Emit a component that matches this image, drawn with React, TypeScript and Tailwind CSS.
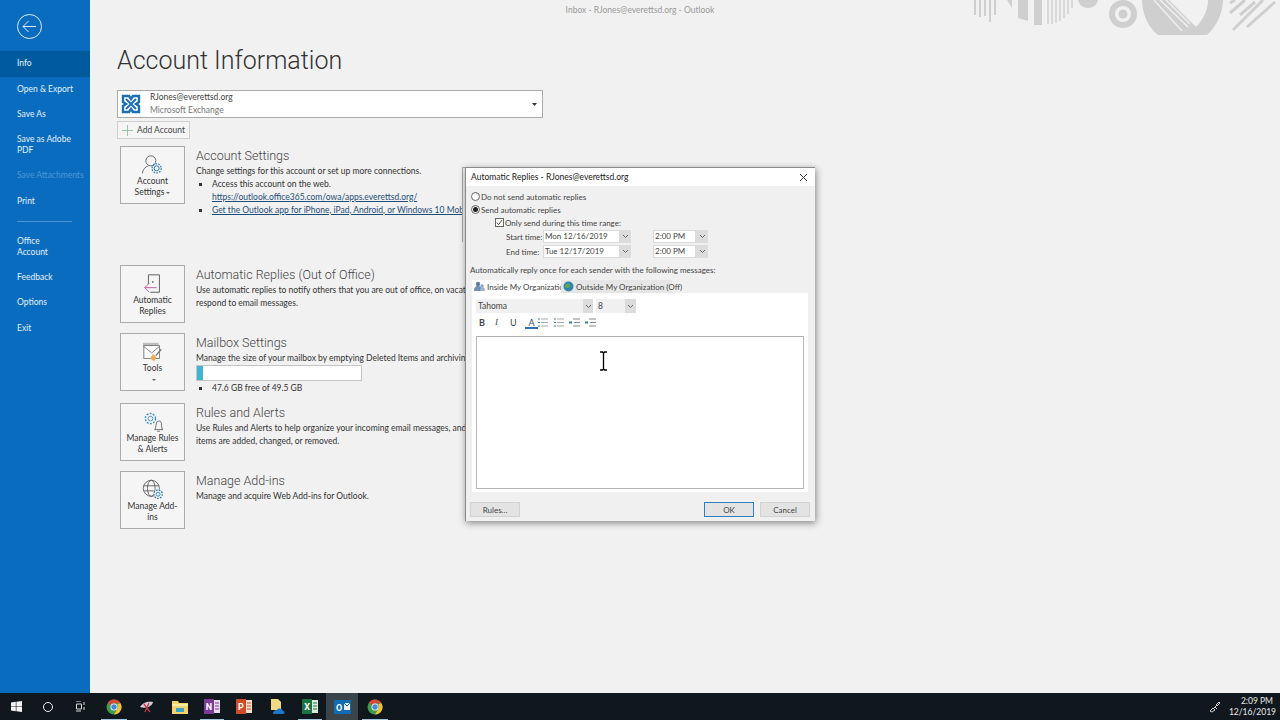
import { ReactNode } from "react";

const font = "font-['Lato','Roboto',sans-serif]";
const heading = "font-['Roboto',sans-serif]";

const NavItem = ({ label, active, dim }: { label: ReactNode; active?: boolean; dim?: boolean }) => (
  <div
    className={`flex items-center pl-[17px] h-[25.5px] text-[8.5px] leading-[11px] whitespace-nowrap ${
      active ? "bg-[#005a9e]" : ""
    } ${dim ? "text-[#4f97d3]" : "text-[#e4f0fa]"}`}
  >
    <span>{label}</span>
  </div>
);

const NavItemTall = ({ top, bottom }: { top: string; bottom: string }) => (
  <div className="flex items-center pl-[17px] h-[35.5px] text-[8.5px] leading-[11px] text-[#e4f0fa]">
    <span>
      {top}
      <br />
      {bottom}
    </span>
  </div>
);

const Caret = () => <span className="inline-block ml-[2px] mb-[1px] border-x-[2px] border-t-[2px] border-x-transparent border-t-[#666]" />;

const PersonGear = () => (
  <svg width="25" height="22" viewBox="0 0 30 26" fill="none">
    <circle cx="13" cy="8" r="6" stroke="#555" strokeWidth="1" />
    <path d="M3 23c0-5 4-8 7-9" stroke="#555" strokeWidth="1" />
    <circle cx="20" cy="17" r="3" stroke="#2b7cb8" strokeWidth="1.2" />
    <circle cx="20" cy="17" r="5.5" stroke="#2b7cb8" strokeWidth="1.5" strokeDasharray="2 1.4" />
  </svg>
);

const DoorArrow = () => (
  <svg width="22" height="22" viewBox="0 0 24 24" fill="none">
    <path d="M7 12V2h12v19H9" stroke="#555" strokeWidth="1" />
    <rect x="11" y="9" width="1.5" height="1.5" fill="#444" />
    <path d="M16 16H3m5-5-5 5 5 5" stroke="#c2569c" strokeWidth="1" />
  </svg>
);

const MailBroom = () => (
  <svg width="22" height="22" viewBox="0 0 24 24" fill="none">
    <rect x="1" y="2" width="17" height="4" fill="#bdbdbd" />
    <rect x="2" y="5" width="17" height="14" fill="#fff" stroke="#777" />
    <path d="m2 6 8.5 7L19 6" stroke="#777" />
    <path d="M21 9l-6 7" stroke="#777" strokeWidth="1.5" />
    <path d="m12 14 4 4-3 4-4-3z" fill="#eda95a" />
  </svg>
);

const GearBell = () => (
  <svg width="22" height="22" viewBox="0 0 26 26" fill="none">
    <circle cx="10" cy="9" r="2.8" stroke="#3a8cc4" strokeWidth="1" />
    <circle cx="10" cy="9" r="6" stroke="#3a8cc4" strokeWidth="1.6" strokeDasharray="2.2 1.6" />
    <path d="M15 22c2-2 1-8 3-9.500 1.500-1 3.500-1 4.500.5 1 2 0 7 2 9z" stroke="#555" strokeWidth="1" />
    <path d="M18 24h3" stroke="#555" />
  </svg>
);

const GlobeGear = () => (
  <svg width="22" height="22" viewBox="0 0 26 26" fill="none">
    <circle cx="11" cy="11" r="9.500" stroke="#555" />
    <ellipse cx="11" cy="11" rx="4.500" ry="9.500" stroke="#555" />
    <path d="M2 8h18M2 14h12" stroke="#555" />
    <circle cx="19" cy="18" r="5.500" fill="#f1f1f1" />
    <circle cx="19" cy="18" r="2.300" stroke="#2b7cb8" />
    <circle cx="19" cy="18" r="5" stroke="#2b7cb8" strokeWidth="1.500" strokeDasharray="2 1.400" />
  </svg>
);

const Card = ({ icon, children }: { icon: ReactNode; children: ReactNode }) => (
  <div className="w-[65px] h-[58px] shrink-0 bg-[#f5f5f5] border border-[#ababab] flex flex-col items-center pt-[7px]">
    <div className="h-[22px] flex items-center justify-center">{icon}</div>
    <div className="text-[8.5px] leading-[10.5px] text-[#333] text-center whitespace-nowrap">{children}</div>
  </div>
);

const Bullet = ({ children }: { children: ReactNode }) => (
  <div className="flex items-start text-[8.5px] leading-[13px] text-[#333] whitespace-nowrap">
    <span className="w-[3px] h-[3px] bg-[#333] ml-[3px] mr-[10px] mt-[5px] shrink-0" />
    <div>{children}</div>
  </div>
);

const Row = ({ children, title, card, h }: { children: ReactNode; title: string; card: ReactNode; h: string }) => (
  <div className={`flex ml-[3px] ${h}`}>
    {card}
    <div className="ml-[11px]">
      <div className={`${heading} text-[12.5px] leading-[18px] font-light text-[#444] mt-[1px] whitespace-nowrap`}>{title}</div>
      <div>{children}</div>
    </div>
  </div>
);

const Desc = ({ children }: { children: ReactNode }) => (
  <div className="text-[8.5px] leading-[12.5px] text-[#333] whitespace-nowrap">{children}</div>
);

const Chevron = () => (
  <svg width="7" height="5" viewBox="0 0 7 5" fill="none" className="shrink-0">
    <path d="m1 1 2.500 2.500L6 1" stroke="#666" />
  </svg>
);

const Combo = ({ value, w, arrow }: { value: string; w: string; arrow: string }) => (
  <div className={`flex h-[13px] ${w}`}>
    <div className="flex-1 bg-white border border-[#dadada] pl-[1px] text-[8px] leading-[11px] text-[#444] whitespace-nowrap">
      {value}
    </div>
    <div className={`${arrow} bg-[#dcdcdc] flex items-center justify-center`}>
      <Chevron />
    </div>
  </div>
);

const DlgBtn = ({ label, primary, w }: { label: string; primary?: boolean; w: string }) => (
  <div
    className={`${w} h-[15px] flex items-center justify-center text-[8px] text-[#444] bg-[#e3e3e3] border ${
      primary ? "border-[#2f7fc0]" : "border-[#d2d2d2]"
    }`}
  >
    {label}
  </div>
);

const Dialog = () => (
  <div className="absolute left-[465px] top-[167px] w-[350px] h-[354px] bg-[#f0f0f0] border-l border-t border-[#8a8a8a] shadow-[1px_2px_7px_rgba(0,0,0,0.45)] flex flex-col">
    <div className="h-[18px] bg-white flex items-center justify-between pl-[5px] pr-[7px] shrink-0">
      <span className="text-[8.5px] text-[#222]">Automatic Replies - RJones@everettsd.org</span>
      <svg width="9" height="9" viewBox="0 0 9 9" fill="none">
        <path d="m1 1 7 7M8 1 1 8" stroke="#333" />
      </svg>
    </div>
    <div className="pl-[4px] text-[8px] text-[#444] flex-1 flex flex-col">
      <div className="h-[13px] mt-[4px] ml-[1px] flex items-center whitespace-nowrap">
        <span className="w-[9px] h-[9px] rounded-full border border-[#666] bg-white mr-[1px]" />
        <span>Do not send automatic replies</span>
      </div>
      <div className="h-[13px] ml-[1px] flex items-center whitespace-nowrap">
        <span className="w-[9px] h-[9px] rounded-full border border-[#666] bg-white flex items-center justify-center mr-[1px]">
          <span className="w-[5px] h-[5px] rounded-full bg-[#222]" />
        </span>
        <span>Send automatic replies</span>
      </div>
      <div className="h-[13px] ml-[25px] flex items-center gap-[1px] whitespace-nowrap">
        <span className="w-[9px] h-[9px] border border-[#666] bg-white flex items-center justify-center">
          <svg width="7" height="7" viewBox="0 0 8 8" fill="none">
            <path d="m1 4 2 2.500L7 1" stroke="#333" />
          </svg>
        </span>
        <span>Only send during this time range:</span>
      </div>
      <div className="h-[15px] flex items-center">
        <span className="w-[37px] ml-[36px] whitespace-nowrap">Start time:</span>
        <Combo value="Mon 12/16/2019" w="w-[88px]" arrow="w-[11px]" />
        <span className="w-[22px]" />
        <Combo value="2:00 PM" w="w-[55px]" arrow="w-[12px]" />
      </div>
      <div className="h-[15px] flex items-center">
        <span className="w-[37px] ml-[36px] whitespace-nowrap">End time:</span>
        <Combo value="Tue 12/17/2019" w="w-[88px]" arrow="w-[11px]" />
        <span className="w-[22px]" />
        <Combo value="2:00 PM" w="w-[55px]" arrow="w-[12px]" />
      </div>
      <div className="h-[12px] mt-[5px] leading-[12px] whitespace-nowrap">
        Automatically reply once for each sender with the following messages:
      </div>
      <div className="h-[13px] mt-[4px] ml-[2px] flex shrink-0">
        <div className="w-[89px] bg-white flex items-center gap-[2px] pl-[2px] whitespace-nowrap">
          <svg width="11" height="11" viewBox="0 0 11 11" className="shrink-0">
            <circle cx="4" cy="3" r="2.200" fill="#5b7fa8" />
            <path d="M0 10c0-4 2-5 4-5s4 1 4 5z" fill="#6f8fb5" />
            <circle cx="8" cy="5" r="1.700" fill="#8aa4c2" />
            <path d="M6 10c0-3 1-4 2.500-4s2.500 1 2.500 4z" fill="#9db3cc" />
          </svg>
          <span>Inside My Organization</span>
        </div>
        <div className="w-[111px] bg-[#e6e6e6] flex items-center gap-[2px] pl-[2px] whitespace-nowrap">
          <svg width="11" height="11" viewBox="0 0 11 11" className="shrink-0">
            <circle cx="5.500" cy="5.500" r="5" fill="#2f84a8" />
            <path d="M2 4c2-2 4-2 5 0s-1 3-3 3-3-1-2-3z" fill="#59a65a" />
          </svg>
          <span>Outside My Organization (Off)</span>
        </div>
      </div>
      <div className="ml-[2px] w-[336px] h-[199px] bg-white shrink-0 pl-[4px] pt-[6px]">
        <div className="flex h-[14px] gap-[3px]">
          <div className="w-[117px] h-[14px] bg-[#f0f0f0] flex">
            <span className="flex-1 text-[8.5px] leading-[15px] pl-[2px] text-[#444]">Tahoma</span>
            <span className="w-[10px] bg-[#dcdcdc] flex items-center justify-center">
              <Chevron />
            </span>
          </div>
          <div className="w-[40px] h-[14px] bg-[#f0f0f0] flex">
            <span className="flex-1 text-[8.5px] leading-[15px] pl-[2px] text-[#444]">8</span>
            <span className="w-[11px] bg-[#dcdcdc] flex items-center justify-center">
              <Chevron />
            </span>
          </div>
        </div>
        <div className="flex items-center h-[13px] mt-[3px] pl-[3px] text-[#444]">
          <span className="w-[16px] text-[9px] font-bold leading-[13px]">B</span>
          <span className="w-[15px] text-[9px] italic font-['Liberation_Serif',serif] leading-[13px]">I</span>
          <span className="w-[15px] text-[9px] leading-[13px]">U</span>
          <span className="w-[13px] text-[9px] leading-[11px] text-[#2d4f7c] border-b-2 border-[#2f6fb5] h-[12px] text-center">A</span>
          <svg width="62" height="11" viewBox="0 0 62 11" fill="none">
            <path d="M0 2h2M0 5.500h2M0 9h2" stroke="#3c78b4" />
            <path d="M3 2h7M3 5.500h7M3 9h7" stroke="#aaa" />
            <path d="M16 2h2M16 5.500h2M16 9h2" stroke="#3c78b4" />
            <path d="M19 2h7M19 5.500h7M19 9h7" stroke="#aaa" />
            <path d="M31 5.500h3" stroke="#3c78b4" strokeWidth="2" />
            <path d="M35 2h7M36 5.500h6M35 9h7" stroke="#888" />
            <path d="M47 5.500h3" stroke="#3c78b4" strokeWidth="2" />
            <path d="M51 2h7M52 5.500h6M51 9h7" stroke="#888" />
          </svg>
        </div>
        <div className="w-[328px] h-[153px] mt-[7px] border border-[#b5b5b5] bg-white" />
      </div>
      <div className="flex mt-[10px]">
        <DlgBtn label="Rules..." w="w-[50px]" />
        <span className="w-[184px]" />
        <DlgBtn label="OK" primary w="w-[50px]" />
        <span className="w-[6px]" />
        <DlgBtn label="Cancel" w="w-[50px]" />
      </div>
    </div>
  </div>
);

// faint Office theme art in the title bar
const Deco = () => (
  <svg
    className="absolute left-[970px] top-0"
    width="310"
    height="38"
    viewBox="0 0 310 38"
    fill="none"
    stroke="#cfcfcf"
  >
    <path d="M5 0v15M10 0v17M15 0v16M20 0v22M25 0v15" strokeWidth="2" />
    <path d="M37 0h5v8z" fill="#cfcfcf" stroke="none" />
    <path d="M48 0h10v21l-10-3zM64 0h8v25h-8z" fill="#cfcfcf" stroke="none" />
    <path d="M78 0v24M82 0v24M86 0v23M90 0v21M94 0v18M98 0v14M102 0v8" strokeWidth="1.500" />
    <path d="M108 0h20c-1 5-5 8-10 8s-9-3-10-8z" fill="#cfcfcf" stroke="none" />
    <circle cx="153" cy="14" r="11" strokeWidth="6" />
    <circle cx="153" cy="14" r="4.500" fill="#cfcfcf" stroke="none" />
    <path
      d="M172 0c0 12 5 26 16 35h49c10-9 16-23 16-35h-15c0 10-5 20-12 27l-27-27z"
      fill="#cfcfcf"
      stroke="none"
    />
    <path d="M184 0l28 31M190 0l28 27M196 0l24 24" stroke="#efefef" strokeWidth="1.500" />
    <path d="M260 3l5-3M260 13l15-13M270 15l15-13M263 30 293 0M277 27l28-25" strokeWidth="3" />
  </svg>
);

const AppIcon = ({ bg, letter, fg }: { bg: string; letter: string; fg: string }) => (
  <svg width="16" height="15" viewBox="0 0 16 15">
    <rect x="5" y="1" width="11" height="13" fill={fg} />
    <path d="M11 4h4M11 7h4M11 10h4" stroke={bg} />
    <rect x="0" y="0" width="10" height="15" fill={bg} />
    <text x="5" y="11" fontSize="9" fontWeight="700" textAnchor="middle" fill="#fff" fontFamily="Roboto">
      {letter}
    </text>
  </svg>
);

const Chrome = () => (
  <svg width="16" height="16" viewBox="0 0 16 16">
    <circle cx="8" cy="8" r="7.500" fill="#3f9a4c" />
    <path d="M8 .5a7.500 7.500 0 0 1 6.500 3.750H8A3.750 3.750 0 0 0 4.500 6.500L2 3.500A7.500 7.500 0 0 1 8 .5z" fill="#d9483b" />
    <path d="M14.500 4.250A7.500 7.500 0 0 1 8 15.500L11.250 10A3.750 3.750 0 0 0 11 5z" fill="#f2c233" />
    <circle cx="8" cy="8" r="3.500" fill="#fff" />
    <circle cx="8" cy="8" r="2.700" fill="#4a86d8" />
  </svg>
);

const Slot = ({ children, w, on, run }: { children: ReactNode; w: string; on?: boolean; run?: boolean }) => (
  <div className={`${w} h-full flex items-center justify-center relative shrink-0 ${on ? "bg-[#39444b]" : ""}`}>
    {children}
    {run && <span className="absolute bottom-0 left-[4px] right-[4px] h-px bg-[#9fc4dc]" />}
  </div>
);

const Taskbar = () => (
  <div className="h-[27px] shrink-0 bg-[#10181d] flex items-center text-[#e8e8e8]">
    <Slot w="w-[32px]">
      <svg width="11" height="11" viewBox="0 0 11 11" fill="#f4f4f4">
        <path d="M0 1.500 4.800.8V5.200H0zM5.400.7 11 0v5.200H5.400zM0 5.800h4.800v4.400L0 9.500zM5.400 5.800H11V11l-5.600-.8z" />
      </svg>
    </Slot>
    <Slot w="w-[31px]">
      <span className="w-[10px] h-[10px] rounded-full border-[1.5px] border-[#eee]" />
    </Slot>
    <Slot w="w-[34px]">
      <svg width="12" height="11" viewBox="0 0 12 11" fill="none" stroke="#d8d8d8">
        <path d="M2 0h5M2 10h5M2.500 3h5v5h-5zM10 1v3M10 6v3" />
      </svg>
    </Slot>
    <Slot w="w-[34px]" run>
      <Chrome />
    </Slot>
    <Slot w="w-[32px]">
      <svg width="16" height="14" viewBox="0 0 16 14" fill="none">
        <path d="M1 7c3-5 8-6 13-5-1 4-6 7-13 5z" fill="#d5cdd6" />
        <path d="m5 4 6 8M10 3 6 12" stroke="#c23b4b" strokeWidth="1.300" />
      </svg>
    </Slot>
    <Slot w="w-[33px]">
      <svg width="16" height="14" viewBox="0 0 16 14">
        <path d="M0 1h6l1 2h9v11H0z" fill="#f5d36b" />
        <rect x="0" y="4" width="16" height="2" fill="#fbe9a8" />
        <rect x="4" y="8" width="8" height="4" fill="#39a7c9" />
      </svg>
    </Slot>
    <Slot w="w-[32px]" run>
      <AppIcon bg="#7a3a96" letter="N" fg="#e8dcee" />
    </Slot>
    <Slot w="w-[32px]">
      <AppIcon bg="#cf4a27" letter="P" fg="#f5ddd4" />
    </Slot>
    <Slot w="w-[34px]">
      <svg width="15" height="16" viewBox="0 0 15 16">
        <path d="M1 0h7l3 3v8H1z" fill="#f3d985" />
        <path d="M3 15c0-3 2-4 4-4 1-2 5-2 6 1 2 0 2 3 0 3z" fill="#1e78c8" />
      </svg>
    </Slot>
    <Slot w="w-[32px]" run>
      <AppIcon bg="#1c7243" letter="X" fg="#d8ebdf" />
    </Slot>
    <Slot w="w-[32px]" on>
      <svg width="17" height="14" viewBox="0 0 17 14">
        <rect x="0" y="0" width="17" height="14" fill="#0f6cb5" />
        <text x="5" y="11" fontSize="9" fontWeight="700" textAnchor="middle" fill="#fff" fontFamily="Roboto">
          O
        </text>
        <rect x="10" y="3" width="6" height="7" fill="#e8f1f8" />
        <path d="m10 3 3 3 3-3" stroke="#0f6cb5" fill="none" />
      </svg>
    </Slot>
    <Slot w="w-[34px]" run>
      <Chrome />
    </Slot>
    <div className="ml-auto flex items-center pr-[4px]">
      <svg width="12" height="12" viewBox="0 0 12 12" fill="none" stroke="#ccc" className="mr-[8px]">
        <path d="M1 10 4 7l2 2-3 2zM6 6l2 2M7 4l3-3 1 1-3 3zM5 7l2-2" />
      </svg>
      <div className="text-[8.5px] leading-[11px] text-right text-[#e8e8e8]">
        <div className="pr-[3px]">2:09 PM</div>
        <div>12/16/2019</div>
      </div>
    </div>
  </div>
);

export default function App() {
  return (
    <div className={`${font} relative w-[1280px] h-[720px] overflow-hidden flex flex-col bg-[#f1f1f1]`}>
      <div className="flex flex-1 min-h-0">
        {/* backstage nav */}
        <div className="w-[90px] shrink-0 bg-[#0a6cbe] flex flex-col">
          <div className="h-[51px] pl-[17px] pt-[14px]">
            <svg width="25" height="25" viewBox="0 0 25 25" fill="none" stroke="#dcecf8">
              <circle cx="12.500" cy="12.500" r="12" />
              <path d="M6 12.500h13M11.500 7l-5.500 5.500 5.500 5.500" />
            </svg>
          </div>
          <NavItem label="Info" active />
          <NavItem label="Open & Export" />
          <NavItem label="Save As" />
          <NavItemTall top="Save as Adobe" bottom="PDF" />
          <NavItem label="Save Attachments" dim />
          <NavItem label="Print" />
          <div className="ml-[17px] w-[55px] h-px bg-[#4a94d2] mt-[7px] mb-[7px]" />
          <NavItemTall top="Office" bottom="Account" />
          <NavItem label="Feedback" />
          <NavItem label="Options" />
          <NavItem label="Exit" />
        </div>
        {/* account info */}
        <div className="flex-1 pl-[27px]">
          <div className="h-[90px] pt-[44px]">
            <h1 className={`${heading} text-[25px] leading-[34px] font-light text-[#333]`}>Account Information</h1>
          </div>
          <div className="w-[426px] h-[28px] bg-white border border-[#ababab] flex items-center">
            <svg width="20" height="20" viewBox="0 0 20 20" fill="none" stroke="#1a6fb5" strokeWidth="2.400" className="ml-[3px]">
              <path d="M2 2h6l2 3 2-3h6v6l-3 2 3 2v6h-6l-2-3-2 3H2v-6l3-2-3-2z" />
              <path d="m5 5 10 10M15 5 5 15" strokeWidth="2" />
            </svg>
            <div className="ml-[9px] text-[8.5px] leading-[13px]">
              <div className="text-[#444]">RJones@everettsd.org</div>
              <div className="text-[#777]">Microsoft Exchange</div>
            </div>
            <svg width="5" height="3" viewBox="0 0 5 3" className="ml-auto mr-[5px]">
              <path d="M0 0h5L2.500 3z" fill="#333" />
            </svg>
          </div>
          <div className="mt-[3px] w-[73px] h-[18px] border border-[#cfcfcf] bg-[#f5f5f5] flex items-center pl-[4px] gap-[4px] text-[8.5px] text-[#444] whitespace-nowrap">
            <svg width="11" height="11" viewBox="0 0 11 11" stroke="#8fcaa8">
              <path d="M5.500 0v11M0 5.500h11" />
            </svg>
            Add Account
          </div>
          <div className="mt-[7px]">
            <Row
              h="h-[119px]"
              title="Account Settings"
              card={
                <Card icon={<PersonGear />}>
                  Account
                  <br />
                  Settings
                  <Caret />
                </Card>
              }
            >
              <Desc>Change settings for this account or set up more connections.</Desc>
              <Bullet>
                Access this account on the web.
                <br />
                <span className="text-[#1f4e79] underline">https://outlook.office365.com/owa/apps.everettsd.org/</span>
              </Bullet>
              <Bullet>
                <span className="text-[#1f4e79] underline">
                  Get the Outlook app for iPhone, iPad, Android, or Windows 10 Mobile.
                </span>
              </Bullet>
            </Row>
            <Row
              h="h-[68px]"
              title="Automatic Replies (Out of Office)"
              card={
                <Card icon={<DoorArrow />}>
                  Automatic
                  <br />
                  Replies
                </Card>
              }
            >
              <Desc>
                Use automatic replies to notify others that you are out of office, on vacation, or not available to
                <br />
                respond to email messages.
              </Desc>
            </Row>
            <Row
              h="h-[70px]"
              title="Mailbox Settings"
              card={
                <Card icon={<MailBroom />}>
                  Tools
                  <br />
                  <Caret />
                </Card>
              }
            >
              <Desc>Manage the size of your mailbox by emptying Deleted Items and archiving.</Desc>
              <div className="w-[166px] h-[16px] bg-white border border-[#c4c4c4]">
                <div className="w-[6px] h-full bg-[#3fb4d0]" />
              </div>
              <div className="mt-[1px]">
                <Bullet>47.6 GB free of 49.5 GB</Bullet>
              </div>
            </Row>
            <Row
              h="h-[68px]"
              title="Rules and Alerts"
              card={
                <Card icon={<GearBell />}>
                  Manage Rules
                  <br />
                  &amp; Alerts
                </Card>
              }
            >
              <Desc>
                Use Rules and Alerts to help organize your incoming email messages, and receive updates when
                <br />
                items are added, changed, or removed.
              </Desc>
            </Row>
            <Row
              h="h-[58px]"
              title="Manage Add-ins"
              card={
                <Card icon={<GlobeGear />}>
                  Manage Add-
                  <br />
                  ins
                </Card>
              }
            >
              <Desc>Manage and acquire Web Add-ins for Outlook.</Desc>
            </Row>
          </div>
        </div>
      </div>
      <Taskbar />

      <div className="absolute left-0 right-0 top-[5px] text-center text-[8.5px] leading-[11px] text-[#9a9a9a]">
        Inbox - RJones@everettsd.org - Outlook
      </div>
      <Deco />

      {/* menu left open behind the dialog */}
      <div className="absolute left-[462px] top-[167px] w-[80px] h-[75px] bg-[#f1f1f1] border-l border-t border-[#a8a8a8]" />
      <Dialog />

      <svg className="absolute left-[599px] top-[351px]" width="9" height="20" viewBox="0 0 9 20" fill="none">
        <path d="M1 1h2.500L4.500 2 5.500 1H8M4.500 2v16M1 19h2.500l1-1 1 1H8" stroke="#000" strokeWidth="1.300" />
      </svg>
    </div>
  );
}
